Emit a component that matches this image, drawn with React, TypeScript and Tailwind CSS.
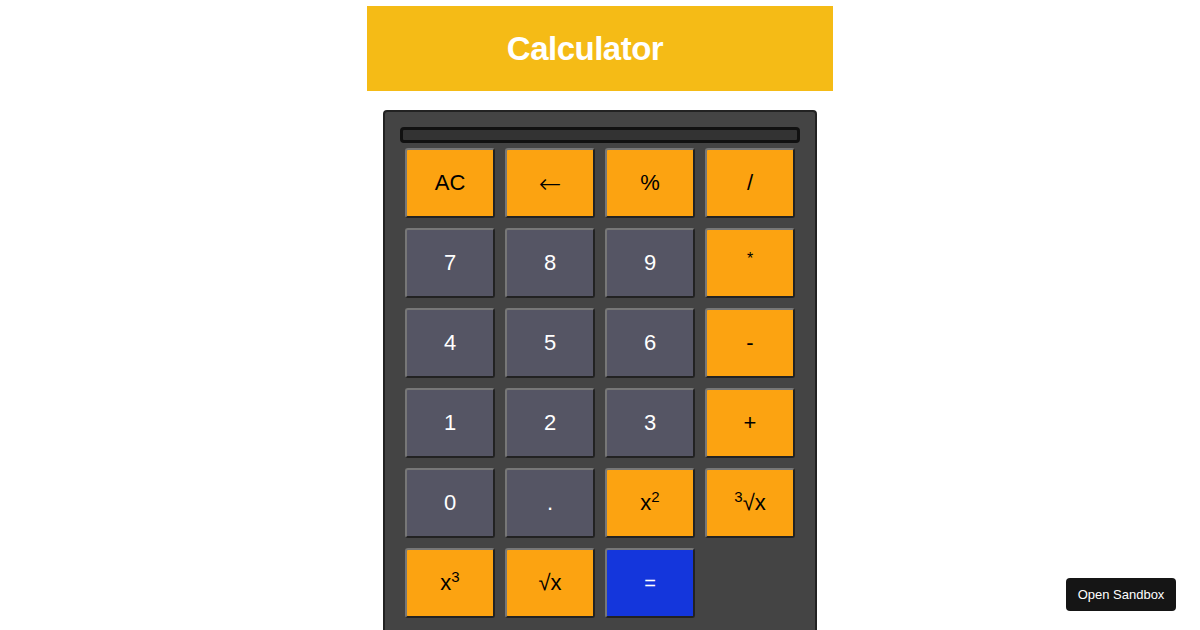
import React from "react";

type Key = { label: React.ReactNode; kind: "op" | "num" | "eq" };

const sup = (n: string) => (
  <sup className="text-[15px] relative -top-[8px]">{n}</sup>
);

const keys: Key[] = [
  { label: "AC", kind: "op" },
  { label: <span className="font-['DejaVu_Sans',sans-serif] text-[27px] font-light">←</span>, kind: "op" },
  { label: "%", kind: "op" },
  { label: "/", kind: "op" },
  { label: "7", kind: "num" },
  { label: "8", kind: "num" },
  { label: "9", kind: "num" },
  { label: <span className="text-[16px] relative -top-[4px]">*</span>, kind: "op" },
  { label: "4", kind: "num" },
  { label: "5", kind: "num" },
  { label: "6", kind: "num" },
  { label: "-", kind: "op" },
  { label: "1", kind: "num" },
  { label: "2", kind: "num" },
  { label: "3", kind: "num" },
  { label: "+", kind: "op" },
  { label: "0", kind: "num" },
  { label: ".", kind: "num" },
  { label: <span>x{sup("2")}</span>, kind: "op" },
  { label: <span>{sup("3")}√x</span>, kind: "op" },
  { label: <span>x{sup("3")}</span>, kind: "op" },
  { label: "√x", kind: "op" },
  { label: "=", kind: "eq" },
];

const kindClass = {
  op: "bg-[#fca311] text-black text-[22px]",
  num: "bg-[#555564] text-white text-[22px]",
  eq: "bg-[#1436dc] text-white text-[20px]",
};

export default function App() {
  return (
    <div className="min-h-[630px] bg-white font-['Liberation_Sans',Arial,sans-serif] flex flex-col items-center pt-[6px] overflow-hidden">
      <div className="w-[466px] h-[85px] bg-[#f5bb16] flex items-center justify-center">
        <h1 className="text-white font-bold text-[33px] tracking-[-0.5px] -ml-[30px]">Calculator</h1>
      </div>

      <div className="mt-[19px] w-[434px] bg-[#444444] border-2 border-[#222222] rounded-[4px] px-[15px] pt-[15px] pb-[40px]">
        <div className="h-[16px] border-[3px] border-[#111111] rounded-[4px] bg-[#333333]"></div>
        <div className="grid grid-cols-[repeat(4,90px)] gap-[10px] px-[5px] pt-[5px]">
          {keys.map((k, i) => (
            <button
              key={i}
              className={`h-[70px] rounded-[3px] border-2 border-t-[#777777] border-l-[#777777] border-b-[#222222] border-r-[#222222] flex items-center justify-center leading-none ${kindClass[k.kind]}`}
            >
              {k.label}
            </button>
          ))}
        </div>
      </div>

      <button className="fixed right-[24px] bottom-[19px] bg-[#151515] text-white text-[13px] rounded-[4px] w-[110px] h-[33px] font-['Liberation_Sans',Arial,sans-serif]">
        Open Sandbox
      </button>
    </div>
  );
}
